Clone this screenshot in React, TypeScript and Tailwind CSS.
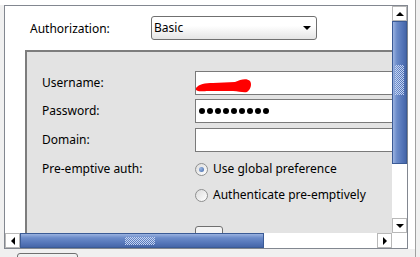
import type { ReactNode } from "react";

const gripClass =
  "bg-[repeating-conic-gradient(#c3d3f2_0_25%,transparent_0_50%)] bg-[length:2px_2px]";

function ArrowButton({ dir }: { dir: "up" | "down" | "left" | "right" }) {
  const tri: Record<typeof dir, string> = {
    up: "border-x-[4px] border-b-[4px] border-x-transparent border-b-black",
    down: "border-x-[4px] border-t-[4px] border-x-transparent border-t-black",
    left: "border-y-[4px] border-r-[4px] border-y-transparent border-r-black",
    right: "border-y-[4px] border-l-[4px] border-y-transparent border-l-black",
  };
  return (
    <div className="flex h-[15px] w-[15px] shrink-0 items-center justify-center border border-[#b8b8b8] bg-white">
      <div className={`h-0 w-0 ${tri[dir]}`} />
    </div>
  );
}

function Field({ children }: { children?: ReactNode }) {
  return (
    <div className="relative flex h-[24px] w-[260px] items-center border border-[#7a7a7a] bg-white pl-[3px]">
      {children}
    </div>
  );
}

function Radio({ checked, label }: { checked?: boolean; label: string }) {
  return (
    <div className="flex items-center gap-[5px]">
      <div className="flex h-[13px] w-[13px] items-center justify-center rounded-full border border-[#8e8f8f] bg-[linear-gradient(135deg,#dcdcdc,#ffffff)]">
        {checked ? (
          <div className="h-[5px] w-[5px] rounded-full bg-[radial-gradient(circle_at_35%_35%,#9bb6e2,#3f67a8)]" />
        ) : null}
      </div>
      <span>{label}</span>
    </div>
  );
}

function Row({ label, children, className }: { label: string; children: ReactNode; className: string }) {
  return (
    <div className={`flex h-[24px] items-center ${className}`}>
      <span className="w-[153px] shrink-0">{label}</span>
      {children}
    </div>
  );
}

export default function App() {
  return (
    <div className="flex h-[257px] w-[420px] overflow-hidden bg-[#f0f0f0] font-['Noto_Sans',sans-serif] text-[12px] leading-none text-black">
      <div className="flex w-[415px] shrink-0 flex-col">
        <div className="flex bg-white pt-[5px]">
          <div className="w-[4px] shrink-0 bg-[#f0f0f0]" />
          {/* scroll pane */}
          <div className="flex h-[244px] w-[404px] flex-col border border-[#828790]">
            <div className="flex min-h-0 flex-1">
              {/* viewport */}
              <div className="min-w-0 flex-1 overflow-hidden bg-white">
                <div className="flex h-[44px] items-start pt-[10px]">
                  <span className="w-[146px] shrink-0 pl-[25px] pt-[7px]">Authorization:</span>
                  <div className="flex h-[24px] w-[166px] items-center justify-between rounded-[3px] border border-[#707070] bg-[linear-gradient(#ffffff,#ffffff_40%,#e4e4e4)] pl-[2px] pr-[5px]">
                    <span>Basic</span>
                    <div className="h-0 w-0 border-x-[4px] border-t-[4px] border-x-transparent border-t-black" />
                  </div>
                </div>
                <div className="ml-[20px] h-[240px] w-[420px] border-2 border-[#7d7d7d] bg-[#e3e3e3] pl-[15px]">
                  <Row label="Username:" className="mt-[19px]">
                    <Field>
                      <svg className="absolute left-[-1px] top-[4px]" width="58" height="18" viewBox="0 0 58 18">
                        <path
                          d="M1 12 C4 8 10 7 18 7 L40 6 C46 3 52 2 55 5 C57 8 56 13 52 16 C48 17 44 15 38 15 L14 15 C8 15 3 16 1 14 Z"
                          fill="#ff0000"
                        />
                      </svg>
                    </Field>
                  </Row>
                  <Row label="Password:" className="mt-[4px]">
                    <Field>
                      <div className="flex gap-[2px]">
                        {Array.from({ length: 9 }).map((_, i) => (
                          <div key={i} className="h-[6px] w-[6px] rounded-full bg-black" />
                        ))}
                      </div>
                    </Field>
                  </Row>
                  <Row label="Domain:" className="mt-[5px]">
                    <Field />
                  </Row>
                  <Row label="Pre-emptive auth:" className="mt-[5px]">
                    <Radio checked label="Use global preference" />
                  </Row>
                  <div className="mt-[2px] flex h-[24px] items-center pl-[153px]">
                    <Radio label="Authenticate pre-emptively" />
                  </div>
                  <div className="ml-[153px] mt-[19px] h-[10px] w-[28px] rounded-t-[3px] border border-[#707070] bg-[#f4f4f4]" />
                </div>
              </div>
              {/* vertical scrollbar */}
              <div className="flex w-[15px] shrink-0 flex-col bg-white">
                <ArrowButton dir="up" />
                <div className="flex h-[143px] items-center justify-center border border-[#3b5b96] bg-[linear-gradient(to_right,#9ab2e0,#6b8bc9_30%,#5273b6_75%,#4666a8)]">
                  <div className={`mb-[25px] h-[30px] w-[9px] ${gripClass}`} />
                </div>
                <div className="flex-1" />
                <ArrowButton dir="down" />
              </div>
            </div>
            {/* horizontal scrollbar */}
            <div className="flex h-[15px] shrink-0">
              <ArrowButton dir="left" />
              <div className="flex w-[244px] items-center justify-center border border-[#3b5b96] bg-[linear-gradient(#9ab2e0,#6b8bc9_30%,#5273b6_75%,#4666a8)]">
                <div className={`ml-[-4px] h-[8px] w-[30px] ${gripClass}`} />
              </div>
              <div className="flex-1 bg-white" />
              <ArrowButton dir="right" />
              <div className="w-[15px] bg-white" />
            </div>
          </div>
          <div className="flex-1 bg-white" />
        </div>
        {/* button row */}
        <div className="pl-[17px] pt-[4px]">
          <div className="flex h-[22px] w-[61px] items-start justify-center rounded-[3px] border border-[#707070] bg-[linear-gradient(#f2f2f2,#dddddd)] pt-[3px]">
            Save
          </div>
        </div>
      </div>
      <div className="w-px shrink-0 bg-[#a0a0a0]" />
    </div>
  );
}
